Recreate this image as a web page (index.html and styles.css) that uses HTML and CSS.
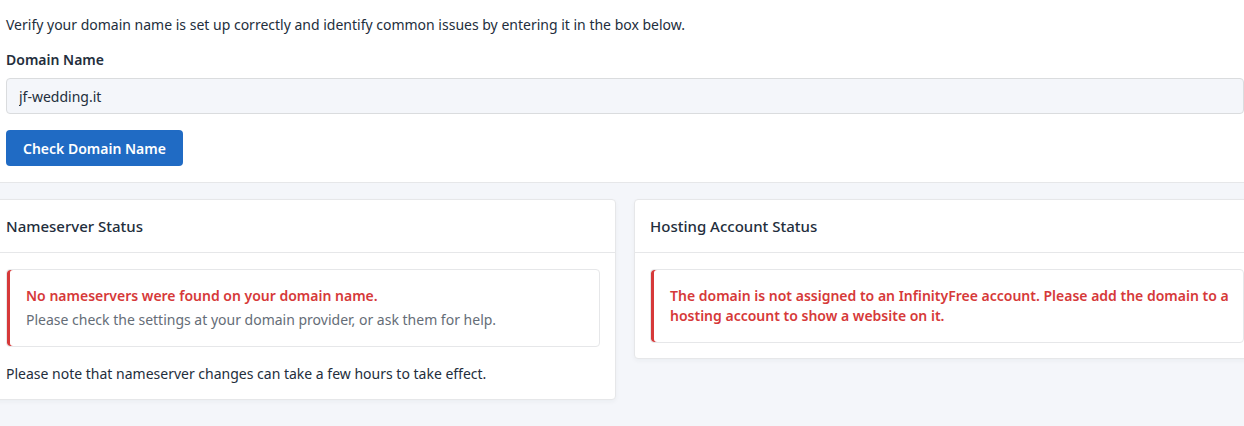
FILE: index.html
```html
<!DOCTYPE html>
<html lang="en">
<head>
  <meta charset="UTF-8">
  <meta name="viewport" content="width=device-width, initial-scale=1.0">
  <title>Domain Checker</title>
  <link rel="stylesheet" href="styles.css">
</head>
<body>
  <div class="page">
    <section class="top">
      <p class="intro">Verify your domain name is set up correctly and identify common issues by entering it in the box below.</p>

      <label class="label" for="domain">Domain Name</label>
      <input class="input" type="text" id="domain" value="jf-wedding.it">

      <button class="btn" type="button">Check Domain Name</button>
    </section>

    <section class="cards">
      <div class="card">
        <div class="card-header">Nameserver Status</div>
        <div class="card-body">
          <div class="alert">
            <div class="alert-title">No nameservers were found on your domain name.</div>
            <div class="alert-text">Please check the settings at your domain provider, or ask them for help.</div>
          </div>
          <p class="note">Please note that nameserver changes can take a few hours to take effect.</p>
        </div>
      </div>

      <div class="card">
        <div class="card-header">Hosting Account Status</div>
        <div class="card-body">
          <div class="alert">
            <div class="alert-title">The domain is not assigned to an InfinityFree account. Please add the domain to a hosting account to show a website on it.</div>
          </div>
        </div>
      </div>
    </section>
  </div>
</body>
</html>
```

FILE: styles.css
```css
* {
  box-sizing: border-box;
}

body {
  margin: 0;
  padding: 0;
  background-color: #f4f6fa;
  font-family: "Noto Sans", Arial, sans-serif;
  font-size: 14px;
  line-height: 20px;
  color: #232e3c;
  overflow: hidden;
}

.page {
  width: 1270px;
  margin-left: -10px;
  min-height: 426px;
}

.top {
  background-color: #fff;
  padding: 15px 16px 16px;
  border-bottom: 1px solid #e6e7e9;
  display: flex;
  flex-direction: column;
  align-items: flex-start;
}

.intro {
  margin: 0 0 15px 0;
}

.label {
  font-weight: 600;
  margin-bottom: 8px;
}

.input {
  width: 100%;
  height: 36px;
  padding: 0 12px;
  margin-bottom: 16px;
  background-color: #f4f6fa;
  border: 1px solid #dadcde;
  border-radius: 4px;
  font-family: inherit;
  font-size: 14px;
  color: #232e3c;
}

.btn {
  height: 36px;
  padding: 0 17px;
  background-color: #206bc4;
  color: #fff;
  border: 0;
  border-radius: 4px;
  font-family: inherit;
  font-size: 14px;
  font-weight: 600;
  cursor: pointer;
}

.cards {
  display: grid;
  grid-template-columns: 1fr 1fr;
  gap: 18px;
  padding-top: 16px;
  align-items: start;
}

.card {
  background-color: #fff;
  border: 1px solid #e6e7e9;
  border-radius: 4px;
  box-shadow: 0 2px 4px rgba(35, 46, 60, 0.04);
}

.card-header {
  padding: 16px 15px;
  border-bottom: 1px solid #e6e7e9;
  font-weight: 500;
  font-size: 15px;
}

.card-body {
  padding: 16px 15px 15px;
}

.alert {
  padding: 16px 8px 16px 19px;
  border: 1px solid #e6e7e9;
  border-radius: 4px;
  box-shadow: inset 3px 0 0 #d63939;
}

.alert-title {
  color: #d63939;
  font-weight: 600;
}

.alert-text {
  color: #656d77;
  margin-top: 4px;
}

.note {
  margin: 17px 0 0 0;
}
```
